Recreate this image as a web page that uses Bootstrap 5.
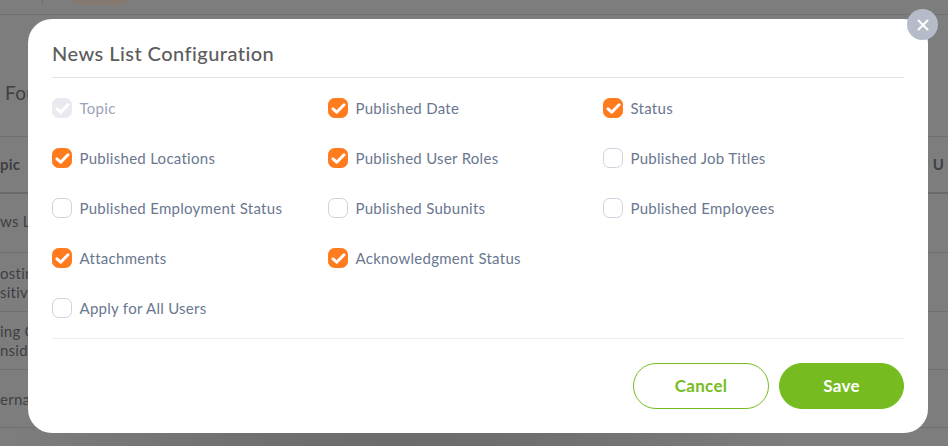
<!DOCTYPE html>
<html lang="en">
<head>
<meta charset="utf-8">
<title>News List Configuration</title>
<link rel="stylesheet" href="https://cdn.jsdelivr.net/npm/bootstrap@5.3.0/dist/css/bootstrap.min.css">
<style>
html,body{height:446px;overflow:hidden;background:#767676;}
body{font-family:"Lato","Noto Sans",sans-serif;}
.scene{position:relative;width:948px;height:446px;overflow:hidden;background:radial-gradient(circle 420px at 400px 600px,#626262,rgba(98,98,98,0)),#7d7d7d;}
.backdrop-page{position:absolute;inset:0;color:#3d3f46;font-size:15px;letter-spacing:.25px;}
.bg-line{position:absolute;left:0;right:0;height:1px;background:#707070;}
.bg-line-strong{height:2px;background:#696969;}
.bg-text{position:absolute;white-space:nowrap;line-height:20px;}
.bg-blob{position:absolute;left:68px;top:-10px;width:64px;height:15px;border-radius:0 0 14px 14px;background:#85796f;}
.bg-tick{position:absolute;left:42px;top:0;width:1px;height:5px;background:#6c6c6c;}
.cfg-dialog{position:absolute;left:28px;top:19px;width:900px;height:414px;background:#fff;border-radius:24px;padding:23px 24px 24px;display:flex;flex-direction:column;}
.cfg-title{font-size:20px;font-weight:500;letter-spacing:.45px;color:#5c5c5c;line-height:23px;margin:0;padding-bottom:12px;border-bottom:1px solid #e3e3e3;}
.cfg-grid{display:grid;grid-template-columns:276px 275px 1fr;grid-auto-rows:50px;padding-top:5px;height:261px;border-bottom:1px solid #eceef3;}
.cfg-item{display:flex;align-items:center;gap:7.5px;height:50px;font-size:15px;letter-spacing:.28px;color:#6a7790;margin:0;}
.cfg-box{width:20px;height:20px;border-radius:6.5px;border:1px solid #cfd2de;background:#fff;flex:none;display:flex;align-items:center;justify-content:center;}
.cfg-box.on{background:#ff7b1d;border-color:#ff7b1d;}
.cfg-box.off{background:#e8eaef;border-color:#e8eaef;}
.cfg-item.dis{color:#9aa3b8;}
.cfg-foot{display:flex;justify-content:flex-end;gap:10px;margin-top:24px;}
.cfg-btn{height:46px;border-radius:23px;font-weight:700;font-size:17px;letter-spacing:.3px;display:flex;align-items:center;justify-content:center;padding:0;}
.cfg-cancel{width:136px;background:#fff;border:1px solid #76bc21;color:#76bc21;}
.cfg-save{width:125px;background:#76bc21;border:1px solid #76bc21;color:#fff;}
.cfg-close{position:absolute;left:907px;top:9px;width:31px;height:31px;border-radius:50%;background:#b6bbc9;border:0;padding:0;display:flex;align-items:center;justify-content:center;}
</style>
</head>
<body>
<div class="scene">
  <div class="backdrop-page">
    <div class="bg-blob"></div>
    <div class="bg-tick"></div>
    <div class="bg-line" style="top:14px"></div>
    <div class="bg-line" style="top:136px"></div>
    <div class="bg-line bg-line-strong" style="top:192px"></div>
    <div class="bg-line" style="top:252px"></div>
    <div class="bg-line" style="top:311px"></div>
    <div class="bg-line" style="top:369px"></div>
    <div class="bg-line" style="top:427px"></div>
    <div class="bg-text" style="left:5px;top:83px;font-size:19px">Fou</div>
    <div class="bg-text fw-bold" style="left:0;top:154px">pic</div>
    <div class="bg-text" style="left:0;top:211px">ws L</div>
    <div class="bg-text" style="left:0;top:263px">ostin</div>
    <div class="bg-text" style="left:0;top:282px">sitive</div>
    <div class="bg-text" style="left:0;top:321px">ing C</div>
    <div class="bg-text" style="left:0;top:340px">nside</div>
    <div class="bg-text" style="left:0;top:389px">erna</div>
    <div class="bg-text fw-bold" style="left:920px;top:154px">d U</div>
  </div>

  <div class="cfg-dialog">
    <h5 class="cfg-title">News List Configuration</h5>
    <div class="cfg-grid">
      <label class="cfg-item dis"><span class="cfg-box off"><svg width="15" height="13" viewBox="0 0 15 13"><path d="M2 6.8 5.7 10.2 13 2.8" fill="none" stroke="#fff" stroke-width="3" stroke-linecap="round" stroke-linejoin="round"/></svg></span>Topic</label>
      <label class="cfg-item"><span class="cfg-box on"><svg width="15" height="13" viewBox="0 0 15 13"><path d="M2 6.8 5.7 10.2 13 2.8" fill="none" stroke="#fff" stroke-width="3" stroke-linecap="round" stroke-linejoin="round"/></svg></span>Published Date</label>
      <label class="cfg-item"><span class="cfg-box on"><svg width="15" height="13" viewBox="0 0 15 13"><path d="M2 6.8 5.7 10.2 13 2.8" fill="none" stroke="#fff" stroke-width="3" stroke-linecap="round" stroke-linejoin="round"/></svg></span>Status</label>
      <label class="cfg-item"><span class="cfg-box on"><svg width="15" height="13" viewBox="0 0 15 13"><path d="M2 6.8 5.7 10.2 13 2.8" fill="none" stroke="#fff" stroke-width="3" stroke-linecap="round" stroke-linejoin="round"/></svg></span>Published Locations</label>
      <label class="cfg-item"><span class="cfg-box on"><svg width="15" height="13" viewBox="0 0 15 13"><path d="M2 6.8 5.7 10.2 13 2.8" fill="none" stroke="#fff" stroke-width="3" stroke-linecap="round" stroke-linejoin="round"/></svg></span>Published User Roles</label>
      <label class="cfg-item"><span class="cfg-box"></span>Published Job Titles</label>
      <label class="cfg-item"><span class="cfg-box"></span>Published Employment Status</label>
      <label class="cfg-item"><span class="cfg-box"></span>Published Subunits</label>
      <label class="cfg-item"><span class="cfg-box"></span>Published Employees</label>
      <label class="cfg-item"><span class="cfg-box on"><svg width="15" height="13" viewBox="0 0 15 13"><path d="M2 6.8 5.7 10.2 13 2.8" fill="none" stroke="#fff" stroke-width="3" stroke-linecap="round" stroke-linejoin="round"/></svg></span>Attachments</label>
      <label class="cfg-item"><span class="cfg-box on"><svg width="15" height="13" viewBox="0 0 15 13"><path d="M2 6.8 5.7 10.2 13 2.8" fill="none" stroke="#fff" stroke-width="3" stroke-linecap="round" stroke-linejoin="round"/></svg></span>Acknowledgment Status</label>
      <span></span>
      <label class="cfg-item"><span class="cfg-box"></span>Apply for All Users</label>
    </div>
    <div class="cfg-foot">
      <button type="button" class="btn cfg-btn cfg-cancel">Cancel</button>
      <button type="button" class="btn cfg-btn cfg-save">Save</button>
    </div>
  </div>
  <button type="button" class="cfg-close" aria-label="Close"><svg width="12" height="12" viewBox="0 0 12 12"><path d="M1.5 1.5 10.5 10.5M10.5 1.5 1.5 10.5" stroke="#fff" stroke-width="2" stroke-linecap="round"/></svg></button>
</div>
<script src="https://cdn.jsdelivr.net/npm/bootstrap@5.3.0/dist/js/bootstrap.bundle.min.js"></script>
</body>
</html>
